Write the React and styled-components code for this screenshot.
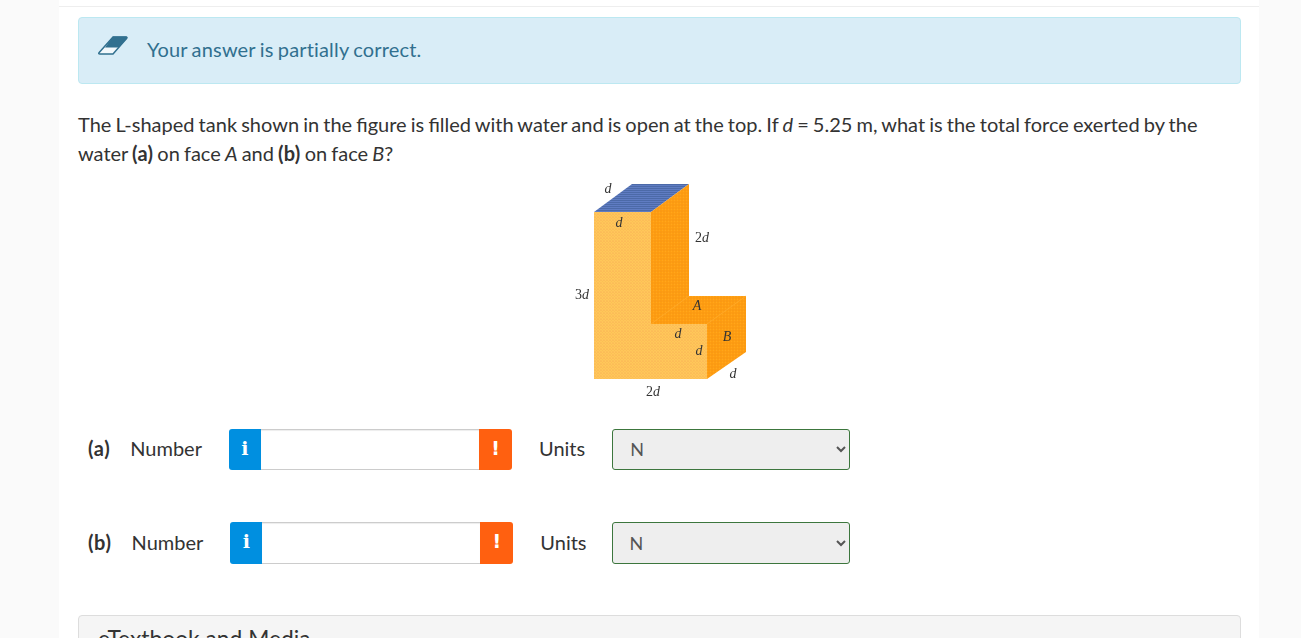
import React from "react";
import styled, { createGlobalStyle } from "styled-components";

const Global = createGlobalStyle`
  html, body { margin: 0; padding: 0; height: 638px; overflow: hidden; background: #fafafa; }
  body { font-family: Lato, "Open Sans", sans-serif; color: #333; }
`;

const Page = styled.div`
  width: 1200px;
  height: 638px;
  margin-left: 59px;
  padding-top: 6px;
  box-sizing: border-box;
  background: #fff;
  overflow: hidden;
`;

const Content = styled.main`
  border-top: 1px solid #eee;
  padding: 10px 18px 0 19px;
`;

const Alert = styled.div`
  display: flex;
  align-items: center;
  gap: 19px;
  height: 67px;
  box-sizing: border-box;
  padding: 0 19px 4px 19px;
  background: #d9edf7;
  border: 1px solid #bce8f1;
  border-radius: 4px;
  color: #31708f;
  font-size: 20px;
  word-spacing: -1px;
  letter-spacing: 0.17px;
`;

const Eraser = styled.svg`
  margin-bottom: 6px;
  flex: none;
`;

const Question = styled.p`
  margin: 26px 0 0;
  font-size: 20px;
  line-height: 29px;
  color: #333;
  word-spacing: -1px;
  b { font-weight: 700; letter-spacing: 0.25px; }
  i { font-style: italic; }
`;

const Figure = styled.div`
  display: flex;
  justify-content: center;
  margin-top: 2px;
  height: 240px;
`;

const TankDrawing = styled.svg`
  filter: blur(0.35px);
`;

const Row = styled.div`
  display: flex;
  align-items: center;
  height: ${(p) => p.$height}px;
  margin-top: ${(p) => p.$top}px;
  padding-left: 10px;
  font-size: 20px;
`;

const Part = styled.b`
  font-weight: 700;
  letter-spacing: 0.6px;
  margin-right: ${(p) => p.$gap}px;
  padding-bottom: ${(p) => p.$lift}px;
`;

const Label = styled.span`
  margin-left: ${(p) => p.$before || 0}px;
  margin-right: ${(p) => p.$gap}px;
  padding-bottom: ${(p) => p.$lift}px;
`;

const Addon = styled.span`
  display: flex;
  align-items: center;
  justify-content: center;
  align-self: stretch;
  width: ${(p) => p.$width}px;
  padding-bottom: 4px;
  box-sizing: border-box;
  background: ${(p) => p.$color};
  color: #fff;
  font-family: ${(p) => p.$font};
  font-weight: 700;
  font-size: 19px;
  border-radius: ${(p) => p.$radius};
`;

const NumberInput = styled.input`
  width: 218px;
  height: 100%;
  box-sizing: border-box;
  margin: 0;
  padding: 0 10px;
  border: 1px solid #ccc;
  border-left: 0;
  border-right: 0;
  border-radius: 0;
  outline: none;
  background: #fff;
  box-shadow: inset 0 1px 1px rgba(0, 0, 0, 0.075);
  font: 20px Lato, sans-serif;
`;

const UnitSelect = styled.select`
  width: 238px;
  height: 100%;
  box-sizing: border-box;
  padding: 0 0 ${(p) => p.$lift}px 13px;
  background-color: #eee;
  border: 1px solid #3c763d;
  border-radius: 3px;
  color: #555;
  font: 18px Lato, sans-serif;
`;

const Media = styled.section`
  margin-top: 51px;
  height: 60px;
  box-sizing: border-box;
  padding: 6px 19px;
  background: #f5f5f5;
  border: 1px solid #ddd;
  border-radius: 4px;
  font-size: 22.8px;
  line-height: 32px;
`;

const EraserIcon = () => (
  <Eraser width="30" height="20" viewBox="0 0 30 20" aria-hidden="true">
    <path d="M15 1 H28 Q29.5 1 28.5 2.5 L15 18 H2 Q0 18 1.2 16.4 Z" fill="#f2f8fb" stroke="#31708f" strokeWidth="1.5" strokeLinejoin="round" />
    <path d="M15 0.5 H28.2 Q30 0.5 29 2.4 L20.5 11.5 H7 Z" fill="#31708f" />
  </Eraser>
);

const Tank = () => (
  <TankDrawing width="200" height="240" viewBox="560 170 200 240" role="img" aria-label="L-shaped tank">
    <defs>
      <pattern id="lightDots" width="3" height="3" patternUnits="userSpaceOnUse">
        <rect width="3" height="3" fill="#ffc75a" />
        <circle cx="1" cy="1" r="0.6" fill="#f4a04e" />
        <circle cx="2.5" cy="2.4" r="0.4" fill="#f9ad4c" />
      </pattern>
      <pattern id="darkDots" width="3" height="3" patternUnits="userSpaceOnUse">
        <rect width="3" height="3" fill="#ff9e10" />
        <circle cx="1" cy="1" r="0.55" fill="#ec8a1c" />
        <circle cx="2.4" cy="2.2" r="0.4" fill="#ffb338" />
      </pattern>
      <pattern id="water" width="3" height="2" patternUnits="userSpaceOnUse">
        <rect width="3" height="2" fill="#5f7cc2" />
        <rect width="3" height="1" fill="#4c6aa8" />
      </pattern>
    </defs>
    <polygon points="594,212 632,184 689,184 651,212" fill="url(#water)" />
    <polygon points="651,212 689,184 689,296 746,296 746,352 707,379 707,324 651,324" fill="url(#darkDots)" />
    <polygon points="594,212 651,212 651,324 707,324 707,379 594,379" fill="url(#lightDots)" />
    <path d="M651 324 L689 296 M707 324 L746 296" stroke="#ffad2e" strokeWidth="0.7" fill="none" />
    <g fontFamily="'Liberation Serif', serif" fontSize="14" fill="#333" fontStyle="italic" textAnchor="middle">
      <text x="608" y="193">d</text>
      <text x="619" y="227">d</text>
      <text x="702" y="242"><tspan fontStyle="normal">2</tspan>d</text>
      <text x="582" y="299"><tspan fontStyle="normal">3</tspan>d</text>
      <text x="697" y="310">A</text>
      <text x="678" y="338">d</text>
      <text x="699" y="355">d</text>
      <text x="727" y="341">B</text>
      <text x="733" y="378">d</text>
      <text x="653" y="396"><tspan fontStyle="normal">2</tspan>d</text>
    </g>
  </TankDrawing>
);

const AnswerRow = ({ part, height, top, partGap, unitsGap, lift, selectLift }) => (
  <Row $height={height} $top={top}>
    <Part $gap={partGap} $lift={lift}>({part})</Part>
    <Label $gap={27} $lift={lift}>Number</Label>
    <Addon $width={32} $color="#008fe0" $font="'DejaVu Serif', serif" $radius="3px 0 0 3px">i</Addon>
    <NumberInput type="text" />
    <Addon $width={33} $color="#ff6010" $font="'DejaVu Sans', sans-serif" $radius="0 3px 3px 0">!</Addon>
    <Label $before={27} $gap={unitsGap} $lift={lift}>Units</Label>
    <UnitSelect defaultValue="N" $lift={selectLift}>
      <option>N</option>
    </UnitSelect>
  </Row>
);

export default function App() {
  return (
    <>
      <Global />
      <Page>
        <Content>
          <Alert>
            <EraserIcon />
            <span>Your answer is partially correct.</span>
          </Alert>
          <Question>
            The L-shaped tank shown in the figure is filled with water and is open at the top. If <i>d</i> = 5.25 m, what is the total force exerted by the water <b>(a)</b> on face <i>A</i> and <b>(b)</b> on face <i>B</i>?
          </Question>
          <Figure>
            <Tank />
          </Figure>
          <AnswerRow part="a" height={41} top={19} partGap={20} unitsGap={27} lift={4} selectLift={2} />
          <AnswerRow part="b" height={42} top={52} partGap={20} unitsGap={25} lift={2} selectLift={0} />
          <Media>eTextbook and Media</Media>
        </Content>
      </Page>
    </>
  );
}
